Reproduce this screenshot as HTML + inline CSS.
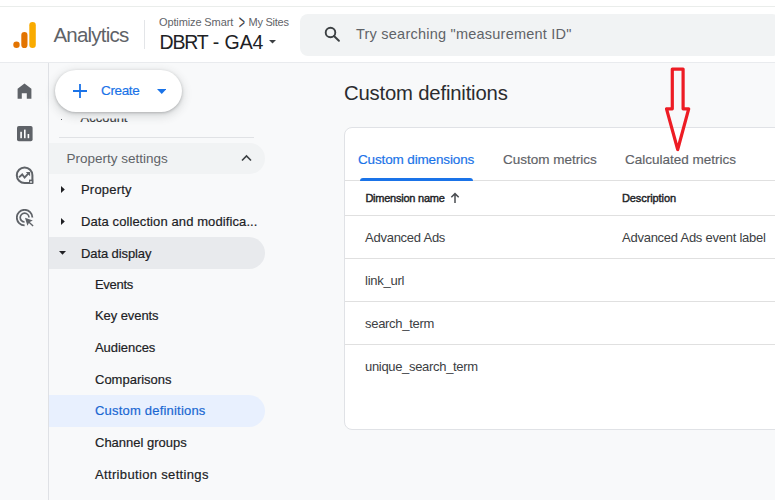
<!DOCTYPE html>
<html lang="en">
<head>
<meta charset="utf-8">
<title>Analytics - Custom definitions</title>
<style>
*{box-sizing:border-box;margin:0;padding:0}
html,body{width:775px;height:500px;overflow:hidden;background:#f8f9fa;font-family:"Liberation Sans",Arial,sans-serif;color:#202124}
body{position:relative}
.abs{position:absolute}
.t{position:absolute;white-space:nowrap}
.m{-webkit-text-stroke:0.18px currentColor}
.topstrip{left:0;top:0;width:775px;height:7px;background:#fff}
.topline{left:0;top:6px;width:775px;height:1px;background:#eaedeb}
.header{left:0;top:7px;width:775px;height:56px;background:#fff;border-bottom:1px solid #e9ebee}
.logo{left:13px;top:20px}
.brand{left:53.5px;top:23.3px;font-size:20.5px;color:#5f6368;letter-spacing:-0.7px;line-height:24px}
.hsep{left:144px;top:20px;width:1px;height:29px;background:#e3e5e8}
.crumb{top:15px;font-size:11px;color:#5f6368;line-height:14px}
.prop{left:159px;top:29px;font-size:19.5px;color:#202124;line-height:26px;letter-spacing:-0.43px}
.search{left:300px;top:14px;width:480px;height:42px;background:#f1f3f4;border-radius:8px}
.ph{left:356px;top:25px;font-size:14.5px;color:#5f6368;line-height:18px;letter-spacing:0.23px}
.rail{left:0;top:63px;width:49px;height:437px;background:#f8f9fa;border-right:1px solid #dfe1e5}
.nav{left:49px;top:63px;width:226px;height:437px;background:#f8f9fa;overflow:hidden}
.create{left:55px;top:70px;width:127px;height:42px;border-radius:21px;background:#fff;box-shadow:0 1px 3px rgba(60,64,67,.3),0 3px 8px 2px rgba(60,64,67,.15)}
.ct{left:101px;top:83px;font-size:13.5px;color:#1a73e8;line-height:16px;letter-spacing:-0.2px}
.row{left:0;height:31px;width:216px}
.pill{border-radius:0 16px 16px 0}
.ni{font-size:13px;line-height:16px;color:#202124}
.h1{left:344px;top:79.6px;font-size:20.3px;line-height:26px;color:#2b2c2f;letter-spacing:-0.15px}
.card{left:343.5px;top:127px;width:450px;height:303px;background:#fff;border:1px solid #e0e2e6;border-radius:8px}
.tab{top:152px;font-size:13.5px;line-height:16px;color:#5f6368}
.th{top:191.3px;font-size:11px;line-height:14px;color:#202124;-webkit-text-stroke:0.4px currentColor;letter-spacing:-0.24px}
.td{font-size:13px;line-height:16px;color:#3c4043;letter-spacing:-0.25px}
.hl{left:344.5px;width:431px;height:1px;background:#e0e0e0}
</style>
</head>
<body>
<div class="abs topstrip"></div>
<div class="abs topline"></div>
<div class="abs header"></div>

<svg class="abs logo" width="26" height="30" viewBox="0 0 26 30">
  <circle cx="3.5" cy="24.8" r="3.2" fill="#e37400"/>
  <rect x="8.3" y="12" width="6.2" height="16" rx="3.1" fill="#e37400"/>
  <rect x="16.3" y="2" width="6.5" height="26" rx="3.25" fill="#f9ab00"/>
</svg>
<div id="brand" class="t brand" style="letter-spacing:-0.8px">Analytics</div>
<div class="abs hsep"></div>
<div id="crumb1" class="t crumb" style="left:159px;letter-spacing:-0.12px">Optimize Smart</div>
<div id="crumbsep" class="t crumb" style="left:237.8px;top:15.6px;font-size:13px;color:#3c4043;transform:scale(0.82,1.5);transform-origin:50% 50%">&gt;</div>
<div id="crumb2" class="t crumb" style="left:248.5px;letter-spacing:-0.25px">My Sites</div>
<div id="prop" class="t prop" style="left:159.6px;letter-spacing:0"><span style="letter-spacing:-1.2px">DBRT</span><span style="letter-spacing:-0.1px"> - </span><span style="letter-spacing:-0.1px">GA4</span></div>
<svg class="abs" style="left:269px;top:40px" width="7" height="4" viewBox="0 0 7 4"><path d="M0 0h7L3.5 3.6z" fill="#3c4043"/></svg>

<div class="abs search"></div>
<svg class="abs" style="left:323.5px;top:26.3px" width="17" height="17" viewBox="0 0 17 17"><circle cx="6.5" cy="6.5" r="4.8" fill="none" stroke="#3c4043" stroke-width="1.9"/><path d="M10 10L14.9 14.7" stroke="#3c4043" stroke-width="2" stroke-linecap="round"/></svg>
<div id="ph" class="t ph">Try searching "measurement ID"</div>

<div class="abs rail"></div>
<!-- rail icons -->
<svg class="abs" style="left:17px;top:82px" width="16" height="18" viewBox="0 0 16 18"><path d="M0.6 6.8L7.5 1.6L14.4 6.8V16.8H9.8V11.2H4.8V16.8H0.6Z" fill="#5f6368"/></svg>
<svg class="abs" style="left:17px;top:125.5px" width="16" height="16" viewBox="0 0 16 16"><rect x="0" y="0" width="15.6" height="15.3" rx="1.8" fill="#5f6368"/><rect x="3.3" y="5.8" width="1.6" height="6.4" fill="#fff"/><rect x="7" y="3.6" width="1.6" height="8.6" fill="#fff"/><rect x="10.6" y="8" width="1.6" height="4.2" fill="#fff"/></svg>
<svg class="abs" style="left:14px;top:165px" width="22" height="22" viewBox="0 0 22 22"><path d="M10.6 2.4A7.8 7.8 0 1 0 10.6 18H18.4V10.2A7.8 7.8 0 0 0 10.6 2.4Z" fill="none" stroke="#5f6368" stroke-width="2" stroke-linejoin="round"/><path d="M5 12.4L8.2 9.5L10.6 12.6L14.4 8.4" fill="none" stroke="#5f6368" stroke-width="1.9"/><path d="M11.8 6.9H16.1V11.2Z" fill="#5f6368"/><rect x="15" y="14.6" width="4.2" height="4.2" fill="#5f6368"/><circle cx="17" cy="17" r="0.9" fill="#f1f3f4"/></svg>
<svg class="abs" style="left:16px;top:208.8px" width="21" height="21" viewBox="0 0 21 21"><path d="M16.4 8.6A7.8 7.8 0 1 0 8.6 16.4" fill="none" stroke="#5f6368" stroke-width="1.8"/><path d="M13 8.6A4.4 4.4 0 1 0 8.6 13" fill="none" stroke="#5f6368" stroke-width="1.7"/><path d="M9 8.8L16.8 11.6L13.8 13L17.6 16.6L16.6 17.6L12.9 14L11.4 16.8Z" fill="#5f6368"/></svg>

<div class="abs nav">
  <div class="abs" style="left:10px;top:74px;width:195px;height:1px;background:#e0e2e5"></div>
  <div class="abs row pill" style="top:80px;background:#f1f3f4"></div>
  <div class="abs row pill" style="top:174px;height:31.5px;background:#e8eaed"></div>
  <div class="abs row pill" style="top:332px;height:31.5px;background:#e8f0fe"></div>
</div>
<!-- clipped "Account" row -->
<div class="abs" style="left:50px;top:100px;width:225px;height:23.5px;overflow:hidden">
  <div id="account" class="t ni m" style="left:30.5px;top:10px;color:#3c4043">Account</div>
  <div class="abs" style="left:10.8px;top:18.8px;width:1.5px;height:1.5px;background:#5f6368"></div>
</div>
<div class="abs" style="left:50px;top:100px;width:225px;height:18.2px;background:#f8f9fa"></div>
<div class="abs" style="left:50px;top:118.2px;width:225px;height:1.2px;background:linear-gradient(#f8f9fa,rgba(248,249,250,0))"></div>

<div id="psettings" class="t" style="left:66.5px;top:150.5px;font-size:13.5px;line-height:16px;color:#5f6368">Property settings</div>
<svg class="abs" style="left:241px;top:154px" width="11" height="8" viewBox="0 0 11 8"><path d="M1 6.5L5.5 2L10 6.5" fill="none" stroke="#3c4043" stroke-width="1.6"/></svg>

<svg class="abs" style="left:61px;top:186px" width="4" height="7" viewBox="0 0 4 7"><path d="M0 0L3.8 3.5L0 7z" fill="#202124"/></svg>
<div id="n1" class="t ni m" style="left:81px;top:182.2px;letter-spacing:0.2px">Property</div>
<svg class="abs" style="left:61px;top:217.5px" width="4" height="7" viewBox="0 0 4 7"><path d="M0 0L3.8 3.5L0 7z" fill="#202124"/></svg>
<div id="n2" class="t ni m" style="left:81px;top:214px;letter-spacing:0.1px">Data collection and modifica...</div>
<svg class="abs" style="left:59px;top:251px" width="7" height="4" viewBox="0 0 7 4"><path d="M0 0L3.5 3.8L7 0z" fill="#202124"/></svg>
<div id="n3" class="t ni m" style="left:81px;top:245.5px;letter-spacing:-0.1px">Data display</div>
<div id="n4" class="t ni m" style="left:95px;top:276.8px;letter-spacing:-0.3px">Events</div>
<div id="n5" class="t ni m" style="left:95px;top:308.4px;letter-spacing:-0.08px">Key events</div>
<div id="n6" class="t ni m" style="left:95px;top:340.0px;letter-spacing:-0.05px">Audiences</div>
<div id="n7" class="t ni m" style="left:95px;top:371.7px">Comparisons</div>
<div id="n8" class="t ni m" style="left:95px;top:403.4px;color:#1967d2;letter-spacing:0.2px">Custom definitions</div>
<div id="n9" class="t ni m" style="left:95px;top:434.9px;letter-spacing:0.0px">Channel groups</div>
<div id="n10" class="t ni m" style="left:95px;top:466.6px;letter-spacing:0.34px">Attribution settings</div>

<div class="abs create"></div>
<svg class="abs" style="left:72px;top:83px" width="16" height="16" viewBox="0 0 16 16"><path d="M8 1v14M1 8h14" stroke="#1a73e8" stroke-width="1.8"/></svg>
<div id="create" class="t ct m" style="letter-spacing:-0.35px">Create</div>
<svg class="abs" style="left:156.5px;top:89.4px" width="9.5" height="5" viewBox="0 0 9.5 5"><path d="M0 0h9.5L4.75 5z" fill="#1a73e8"/></svg>

<div id="h1" class="t h1" style="letter-spacing:-0.18px">Custom definitions</div>

<div class="abs card"></div>
<div id="tab1" class="t tab m" style="left:358px;color:#1a73e8;letter-spacing:-0.14px">Custom dimensions</div>
<div id="tab2" class="t tab m" style="left:503px">Custom metrics</div>
<div id="tab3" class="t tab m" style="left:625px">Calculated metrics</div>
<div class="abs hl" style="top:180px"></div>
<div class="abs" style="left:360.3px;top:178.4px;width:112.7px;height:2.6px;background:#1a73e8;border-radius:3px 3px 0 0"></div>
<div id="th1" class="t th" style="left:365.4px">Dimension name</div>
<svg class="abs" style="left:450px;top:192px" width="10" height="12" viewBox="0 0 10 12"><path d="M5 11V2M1.3 5.3L5 1.6L8.7 5.3" fill="none" stroke="#4a4d51" stroke-width="1.5"/></svg>
<div id="th2" class="t th" style="left:622px;letter-spacing:-0.1px">Description</div>
<div class="abs hl" style="top:215px"></div>
<div id="td1" class="t td" style="left:365px;top:230px">Advanced Ads</div>
<div id="td1b" class="t td" style="left:622px;top:230px">Advanced Ads event label</div>
<div class="abs hl" style="top:258px"></div>
<div id="td2" class="t td" style="left:365px;top:273px">link_url</div>
<div class="abs hl" style="top:301px"></div>
<div id="td3" class="t td" style="left:365px;top:316px;letter-spacing:-0.3px">search_term</div>
<div class="abs hl" style="top:344px"></div>
<div id="td4" class="t td" style="left:365px;top:359px;letter-spacing:-0.32px">unique_search_term</div>

<!-- red annotation arrow -->
<svg class="abs" style="left:660px;top:64px" width="36" height="90" viewBox="0 0 36 90">
  <path d="M12.3 5.1H23.1V44.8H28.7L17.7 85.5L6.5 44.8H12.3Z" fill="none" stroke="#ed1c24" stroke-width="3.2" stroke-linejoin="round"/>
</svg>
</body>
</html>
